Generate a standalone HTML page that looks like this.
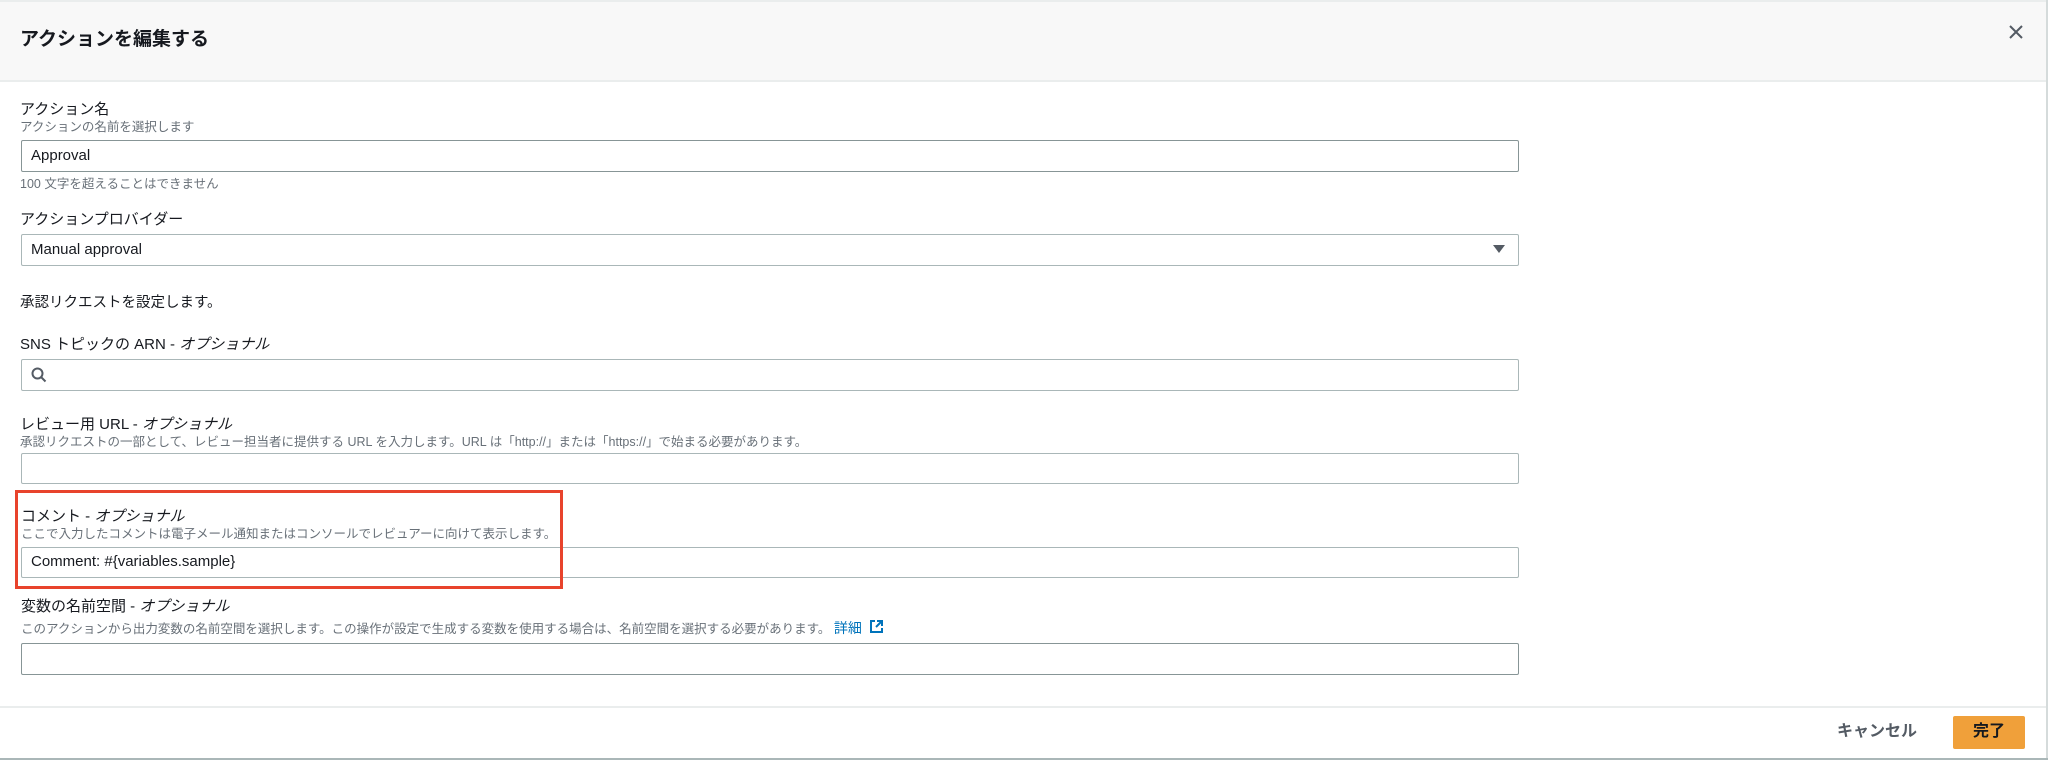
<!DOCTYPE html>
<html><head><meta charset="utf-8"><style>
*{margin:0;padding:0;box-sizing:border-box}
body{width:2048px;height:760px;background:#fff;position:relative;overflow:hidden;font-family:"Liberation Sans","Noto Sans CJK JP",sans-serif;color:#16191f}
.a{position:absolute;white-space:nowrap;line-height:1}
.hdr{position:absolute;left:0;top:0;width:2047px;height:82px;background:#f8f8f8;border-top:2px solid #eaeded;border-bottom:2px solid #eaeded}
.lbl{font-size:15px;color:#16191f}
.lbl i{font-style:italic}
.desc{font-size:12.5px;color:#687078}
.in{position:absolute;left:21px;width:1498px;border:1px solid #aab7b8;border-radius:2px;background:#fff}
.dk{border-color:#879596}
.txt{font-size:15px;color:#16191f}
</style></head><body>
<div class="hdr"></div>
<div style="position:absolute;right:0;top:0;width:2px;height:760px;background:#d5dbdb"></div>
<div style="position:absolute;left:0;bottom:0;width:2048px;height:2px;background:#aab7b8"></div>
<div class="a" style="left:20px;top:30px;font-size:19px;font-weight:bold">アクションを編集する</div>
<svg class="a" style="left:2008px;top:24px" width="16" height="16" viewBox="0 0 16 16"><path d="M2 2L14 14M14 2L2 14" stroke="#545b64" stroke-width="2"/></svg>

<div class="a lbl" style="left:20px;top:102px">アクション名</div>
<div class="a desc" style="left:20px;top:121px">アクションの名前を選択します</div>
<div class="in dk" style="top:140px;height:32px"></div>
<div class="a txt" style="left:31px;top:148px">Approval</div>
<div class="a desc" style="left:20px;top:178px">100 文字を超えることはできません</div>

<div class="a lbl" style="left:20px;top:212px">アクションプロバイダー</div>
<div class="in" style="top:234px;height:32px"></div>
<div class="a txt" style="left:31px;top:242px">Manual approval</div>
<svg class="a" style="left:1493px;top:244px" width="12" height="10" viewBox="0 0 12 10"><path d="M0 1H12L6 9Z" fill="#545b64"/></svg>

<div class="a" style="left:20px;top:296px;font-size:14.5px">承認リクエストを設定します。</div>

<div class="a lbl" style="left:20px;top:337px">SNS トピックの ARN - <i>オプショナル</i></div>
<div class="in" style="top:359px;height:32px"></div>
<svg class="a" style="left:31px;top:367px" width="16" height="16" viewBox="0 0 16 16"><circle cx="6.5" cy="6.5" r="5" fill="none" stroke="#545b64" stroke-width="2"/><path d="M10 10L14.5 14.5" stroke="#545b64" stroke-width="2"/></svg>

<div class="a lbl" style="left:20px;top:417px">レビュー用 URL - <i>オプショナル</i></div>
<div class="a desc" style="left:20px;top:436px">承認リクエストの一部として、レビュー担当者に提供する URL を入力します。URL は「http://」または「https://」で始まる必要があります。</div>
<div class="in" style="top:453px;height:31px"></div>

<div class="a lbl" style="left:21px;top:509px">コメント - <i>オプショナル</i></div>
<div class="a desc" style="left:21px;top:528px">ここで入力したコメントは電子メール通知またはコンソールでレビュアーに向けて表示します。</div>
<div class="in" style="top:547px;height:31px"></div>
<div class="a txt" style="left:31px;top:554px">Comment: #{variables.sample}</div>
<div style="position:absolute;left:15px;top:490px;width:548px;height:99px;border:3px solid #e8432c"></div>

<div class="a lbl" style="left:21px;top:599px">変数の名前空間 - <i>オプショナル</i></div>
<div class="a desc" style="left:21px;top:621px">このアクションから出力変数の名前空間を選択します。この操作が設定で生成する変数を使用する場合は、名前空間を選択する必要があります。 <span style="color:#0073bb;font-size:14px">詳細</span></div>
<svg class="a" style="left:869px;top:619px" width="15" height="15" viewBox="0 0 15 15"><path d="M6 2H2V13H13V9M8 2H13V7M13 2L7 8" fill="none" stroke="#0073bb" stroke-width="2"/></svg>
<div class="in dk" style="top:643px;height:32px"></div>

<div style="position:absolute;left:0;top:706px;width:2046px;height:2px;background:#eaeded"></div>
<div class="a" style="left:1837px;top:724px;font-size:16px;font-weight:bold;color:#545b64">キャンセル</div>
<div style="position:absolute;left:1953px;top:716px;width:72px;height:33px;background:#f0a03a;border-radius:2px"></div>
<div class="a" style="left:1973px;top:724px;font-size:16px;font-weight:bold;color:#16191f">完了</div>
</body></html>
